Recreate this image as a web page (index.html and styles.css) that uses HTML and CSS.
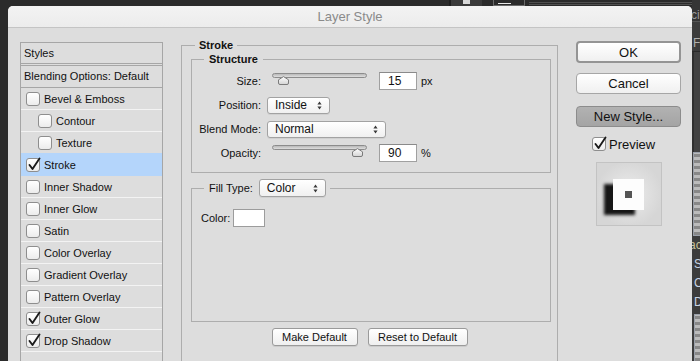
FILE: index.html
```html
<!DOCTYPE html>
<html>
<head>
<meta charset="utf-8">
<title>Layer Style</title>
<link rel="stylesheet" href="styles.css">
</head>
<body>
<div class="screen">
  <div class="lspace"></div>
  <div class="center">
    <div class="top">
      <div class="top-gap"></div>
      <div class="top-box1"><span class="top-sq"></span></div>
      <div class="top-box2"><span class="top-glyph"></span></div>
      <div class="top-lines"></div>
    </div>
    <div class="dialog">
      <div class="titlebar">Layer Style</div>
      <div class="dbody">
        <ul class="styles">
          <li class="hdr">Styles</li>
          <li class="blend">Blending Options: Default</li>
          <li class="item"><span class="cb"></span>Bevel &amp; Emboss</li>
          <li class="item sub"><span class="cb"></span>Contour</li>
          <li class="item sub"><span class="cb"></span>Texture</li>
          <li class="item sel"><span class="cb"><svg class="chk" viewBox="0 0 14 15"><path d="M2.5 8 L5.5 12 L12.5 1.5"/></svg></span>Stroke</li>
          <li class="item"><span class="cb"></span>Inner Shadow</li>
          <li class="item"><span class="cb"></span>Inner Glow</li>
          <li class="item"><span class="cb"></span>Satin</li>
          <li class="item"><span class="cb"></span>Color Overlay</li>
          <li class="item"><span class="cb"></span>Gradient Overlay</li>
          <li class="item"><span class="cb"></span>Pattern Overlay</li>
          <li class="item"><span class="cb"><svg class="chk" viewBox="0 0 14 15"><path d="M2.5 8 L5.5 12 L12.5 1.5"/></svg></span>Outer Glow</li>
          <li class="item"><span class="cb"><svg class="chk" viewBox="0 0 14 15"><path d="M2.5 8 L5.5 12 L12.5 1.5"/></svg></span>Drop Shadow</li>
          <li class="empty"></li>
        </ul>

        <fieldset class="stroke">
          <legend class="lg-stroke">Stroke</legend>
          <fieldset class="structure">
            <legend class="lg-structure">Structure</legend>
            <div class="rows">
              <div class="row">
                <span class="lbl">Size:</span>
                <div class="slider"><div class="track"></div><svg class="thumb" style="left:6px" viewBox="0 0 11 9"><defs><linearGradient id="tg1" x1="0" y1="0" x2="0" y2="1"><stop offset="0" stop-color="#ffffff"/><stop offset="1" stop-color="#d4d4d4"/></linearGradient></defs><path d="M0.5 7 V3.8 L5.5 0.6 L10.5 3.8 V7 Q10.5 8.5 9 8.5 H2 Q0.5 8.5 0.5 7 Z" fill="url(#tg1)" stroke="#7b7b7b"/></svg></div>
                <span class="field">15</span>
                <span class="unit">px</span>
              </div>
              <div class="row">
                <span class="lbl">Position:</span>
                <span class="popup pos">Inside<svg class="arr" viewBox="0 0 5 9"><path d="M2.5 0.5 L4.6 3.5 H0.4 Z M2.5 8.5 L4.6 5.5 H0.4 Z"/></svg></span>
              </div>
              <div class="row">
                <span class="lbl">Blend Mode:</span>
                <span class="popup mode">Normal<svg class="arr" viewBox="0 0 5 9"><path d="M2.5 0.5 L4.6 3.5 H0.4 Z M2.5 8.5 L4.6 5.5 H0.4 Z"/></svg></span>
              </div>
              <div class="row">
                <span class="lbl">Opacity:</span>
                <div class="slider"><div class="track"></div><svg class="thumb" style="left:80px" viewBox="0 0 11 9"><defs><linearGradient id="tg2" x1="0" y1="0" x2="0" y2="1"><stop offset="0" stop-color="#ffffff"/><stop offset="1" stop-color="#d4d4d4"/></linearGradient></defs><path d="M0.5 7 V3.8 L5.5 0.6 L10.5 3.8 V7 Q10.5 8.5 9 8.5 H2 Q0.5 8.5 0.5 7 Z" fill="url(#tg2)" stroke="#7b7b7b"/></svg></div>
                <span class="field">90</span>
                <span class="unit">%</span>
              </div>
            </div>
          </fieldset>

          <fieldset class="fill">
            <legend class="lg-fill"><span>Fill Type:</span><span class="popup ftype">Color<svg class="arr" viewBox="0 0 5 9"><path d="M2.5 0.5 L4.6 3.5 H0.4 Z M2.5 8.5 L4.6 5.5 H0.4 Z"/></svg></span></legend>
            <div class="fillin">
              <span>Color:</span><span class="swatch"></span>
            </div>
          </fieldset>

          <div class="btnrow">
            <span class="pbtn mk">Make Default</span>
            <span class="pbtn rs">Reset to Default</span>
          </div>
        </fieldset>

        <div class="rightcol">
          <span class="btn ok">OK</span>
          <span class="btn cancel">Cancel</span>
          <span class="btn newstyle">New Style...</span>
          <div class="prev"><span class="cb"><svg class="chk" viewBox="0 0 14 15"><path d="M2.5 8 L5.5 12 L12.5 1.5"/></svg></span><span>Preview</span></div>
          <div class="pbox"><div class="psq"><div class="pdot"></div></div></div>
        </div>
      </div>
    </div>
  </div>
  <div class="rstrip">
    <div class="rs-a">ci</div>
    <div class="rs-b">Fi</div>
    <div class="rs-c"></div>
    <div class="rs-check"></div>
    <div class="rs-t first">ac</div>
    <div class="rs-t">S</div>
    <div class="rs-t">C</div>
    <div class="rs-t">D</div>
    <div class="rs-check2"></div>
  </div>
</div>
</body>
</html>
```

FILE: styles.css
```css
body {
  margin: 0;
  background: #2b2b2b;
  font-family: "Liberation Sans", Arial, sans-serif;
  font-size: 11px;
  color: #111;
}

.screen {
  display: flex;
  width: 700px;
  height: 361px;
  overflow: hidden;
}

.lspace {
  width: 8px;
  flex: none;
}

.center {
  width: 684px;
  flex: none;
  display: flex;
  flex-direction: column;
}

/* top strip of the app behind */
.top {
  height: 6px;
  display: flex;
  flex: none;
}
.top-gap {
  width: 441px;
  border-right: 2px solid #1f1f1f;
}
.top-box1 {
  width: 31px;
  background: #3a3a3a;
  display: flex;
  justify-content: center;
}
.top-sq {
  width: 7px;
  height: 4px;
  background: #d8d8d8;
}
.top-box2 {
  width: 32px;
  margin-left: 11px;
  box-sizing: border-box;
  border: 1px solid #6a6a6a;
  border-top: none;
  padding-left: 4px;
}
.top-glyph {
  display: block;
  width: 13px;
  height: 3px;
  border-bottom: 1px solid #e8e8e8;
}
.top-lines {
  flex: 1;
  margin-left: 4px;
  border-top: 1px solid #505050;
  border-bottom: 1px solid #505050;
  height: 1px;
  margin-top: 2px;
}

.dialog {
  flex: 1;
  background: #dddddd;
  border-radius: 5px 5px 0 0;
  overflow: hidden;
}

.titlebar {
  height: 21px;
  line-height: 21px;
  background: linear-gradient(#f3f3f3, #ececec);
  border-bottom: 1px solid #c4c4c4;
  text-align: center;
  color: #8a8a8a;
  font-size: 13px;
}

.dbody {
  display: flex;
  align-items: flex-start;
  gap: 18px;
  padding: 10px 11px 0 12px;
}

/* left styles list */
.styles {
  width: 143px;
  flex: none;
  box-sizing: border-box;
  margin: 4px 0 0;
  padding: 0;
  list-style: none;
  border: 1px solid #a6a6a6;
  border-bottom: none;
  height: 400px;
}
.hdr {
  height: 20px;
  line-height: 20px;
  padding-left: 3px;
  border-bottom: 3px double #a6a6a6;
}
.blend {
  height: 21px;
  line-height: 21px;
  padding-left: 3px;
  border-bottom: 1px solid #a6a6a6;
}
.item {
  height: 21px;
  display: flex;
  align-items: center;
  gap: 4px;
  padding-left: 5px;
  border-bottom: 1px solid #f3f3f3;
}
.item.sub {
  padding-left: 17px;
}
.item.sel {
  background: #b4d5fb;
  border-bottom-color: #b4d5fb;
  box-shadow: 0 -1px 0 #b4d5fb;
}

.cb {
  position: relative;
  width: 14px;
  height: 14px;
  flex: none;
  box-sizing: border-box;
  border: 1px solid #8e8e8e;
  border-radius: 3px;
  background: linear-gradient(#ffffff, #ececec);
}
.chk {
  position: absolute;
  left: 0;
  top: -2px;
  width: 14px;
  height: 15px;
  overflow: visible;
}
.chk path {
  fill: none;
  stroke: #1a1a1a;
  stroke-width: 1.9;
  stroke-linecap: round;
  stroke-linejoin: round;
}

/* group boxes */
fieldset {
  margin: 0;
  min-width: 0;
}
.stroke {
  width: 377px;
  flex: none;
  box-sizing: border-box;
  padding: 0 6px 40px 9px;
  border: 1px solid #adadad;
}
.lg-stroke {
  font-weight: bold;
  line-height: 14px;
  padding: 0 4px;
  margin-left: 4px;
}
.structure {
  padding: 0 0 7px;
  border: 1px solid #adadad;
}
.lg-structure {
  font-weight: bold;
  line-height: 14px;
  padding: 0 5px;
  margin-left: 12px;
}
.rows {
  padding-top: 3px;
}
.row {
  display: flex;
  align-items: center;
  height: 24px;
}
.lbl {
  width: 69px;
  flex: none;
  text-align: right;
}

.slider {
  position: relative;
  width: 95px;
  height: 13px;
  flex: none;
  align-self: flex-start;
  margin: 4px 0 0 11px;
}
.track {
  height: 5px;
  box-sizing: border-box;
  border: 1px solid #8c8c8c;
  border-radius: 3px;
  background: linear-gradient(#b9b9b9, #dedede);
}
.thumb {
  position: absolute;
  top: 3px;
  width: 11px;
  height: 9px;
}

.field {
  width: 38px;
  height: 18px;
  flex: none;
  box-sizing: border-box;
  margin-left: 12px;
  padding-left: 8px;
  background: #fff;
  border: 1px solid #a0a0a0;
  border-top-color: #8a8a8a;
  line-height: 16px;
  font-size: 12px;
}
.unit {
  margin-left: 4px;
}

.popup {
  position: relative;
  display: flex;
  align-items: center;
  justify-content: space-between;
  height: 17px;
  box-sizing: border-box;
  margin-left: 6px;
  padding: 0 7px 0 7px;
  border: 1px solid #a2a2a2;
  border-radius: 3px;
  background: linear-gradient(#ffffff, #f0f0f0);
  box-shadow: 0 1px 0 rgba(0, 0, 0, 0.06);
  font-size: 12px;
}
.pos {
  width: 63px;
}
.mode {
  width: 119px;
}
.arr {
  width: 5px;
  height: 9px;
  fill: #3a3a3a;
}

.fill {
  margin-top: 6px;
  padding: 0;
  border: 1px solid #adadad;
}
.lg-fill {
  display: flex;
  align-items: center;
  gap: 6px;
  padding: 0 4px 0 5px;
  margin-left: 12px;
}
.ftype {
  width: 67px;
  height: 18px;
  margin-left: 0;
}
.fillin {
  height: 124px;
  box-sizing: border-box;
  padding: 12px 0 0 9px;
  display: flex;
  align-items: flex-start;
  gap: 3px;
}
.fillin > span:first-child {
  line-height: 18px;
}
.swatch {
  width: 32px;
  height: 18px;
  box-sizing: border-box;
  background: #fff;
  border: 1px solid #9c9c9c;
}

.btnrow {
  display: flex;
  justify-content: center;
  gap: 10px;
  margin-top: 6px;
  padding-right: 3px;
}
.pbtn {
  height: 18px;
  box-sizing: border-box;
  display: flex;
  align-items: center;
  justify-content: center;
  border: 1px solid #9a9a9a;
  border-radius: 3px;
  background: linear-gradient(#ffffff, #efefef);
  box-shadow: 0 1px 0 rgba(0, 0, 0, 0.08);
}
.mk {
  width: 86px;
}
.rs {
  width: 100px;
}

/* right column */
.rightcol {
  width: 105px;
  flex: none;
  display: flex;
  flex-direction: column;
  align-items: center;
  margin-top: 3px;
}
.btn {
  width: 105px;
  height: 21px;
  box-sizing: border-box;
  display: flex;
  align-items: center;
  justify-content: center;
  border: 1px solid #a6a6a6;
  border-radius: 4px;
  background: linear-gradient(#ffffff, #f0f0f0);
  font-size: 13px;
  color: #111;
}
.ok {
  height: 22px;
  border: 2px solid #949494;
}
.cancel {
  margin-top: 10px;
}
.newstyle {
  margin-top: 12px;
  background: linear-gradient(#b2b2b2, #a4a4a4);
  border-color: #8c8c8c;
}
.prev {
  align-self: flex-start;
  margin: 10px 0 0 16px;
  display: flex;
  align-items: center;
  gap: 3px;
  font-size: 13px;
  height: 14px;
}
.pbox {
  margin-top: 11px;
  width: 66px;
  height: 64px;
  box-sizing: border-box;
  border: 1px solid #c3c3c3;
  background: radial-gradient(circle at 50% 50%, #eeeeee 0, #e2e2e2 35%, #d6d6d6 75%);
  display: flex;
  align-items: center;
  justify-content: center;
}
.psq {
  width: 31px;
  height: 31px;
  background: #fdfdfd;
  box-shadow: -9px 5px 3px rgba(0, 0, 0, 0.9);
  display: flex;
  align-items: center;
  justify-content: center;
}
.pdot {
  width: 7px;
  height: 7px;
  background: #555;
}

/* right strip of the app behind */
.rstrip {
  width: 8px;
  flex: none;
  background: #3c3c3c;
  border-left: 0;
  color: #c4c4c4;
  font-size: 12px;
  overflow: hidden;
  white-space: nowrap;
}
.rs-a {
  height: 22px;
  box-sizing: border-box;
  padding-top: 8px;
  text-indent: -1px;
  color: #9a9a9a;
  border-bottom: 1px solid #555;
  background: #353535;
}
.rs-b {
  height: 30px;
  box-sizing: border-box;
  padding-top: 14px;
  text-indent: 1px;
  color: #b0b0b0;
  border-bottom: 1px solid #2a2a2a;
}
.rs-c {
  height: 100px;
  background: #424242;
  border-left: 2px solid #303030;
}
.rs-check {
  height: 84px;
  box-sizing: border-box;
  border: 1px solid #9aa0aa;
  border-right: none;
  background: repeating-linear-gradient(0deg, #888 0 3px, #bbb 3px 6px);
  margin-left: 1px;
}
.rs-t {
  height: 19px;
  line-height: 19px;
  text-indent: 2px;
  color: #c8d4e4;
}
.rs-t.first {
  text-indent: -3px;
  color: #c9c29a;
}
.rs-check2 {
  height: 60px;
  box-sizing: border-box;
  border: 1px solid #9aa0aa;
  border-right: none;
  margin-left: 2px;
  margin-top: 2px;
  background: repeating-linear-gradient(0deg, #888 0 3px, #bbb 3px 6px);
}
```
